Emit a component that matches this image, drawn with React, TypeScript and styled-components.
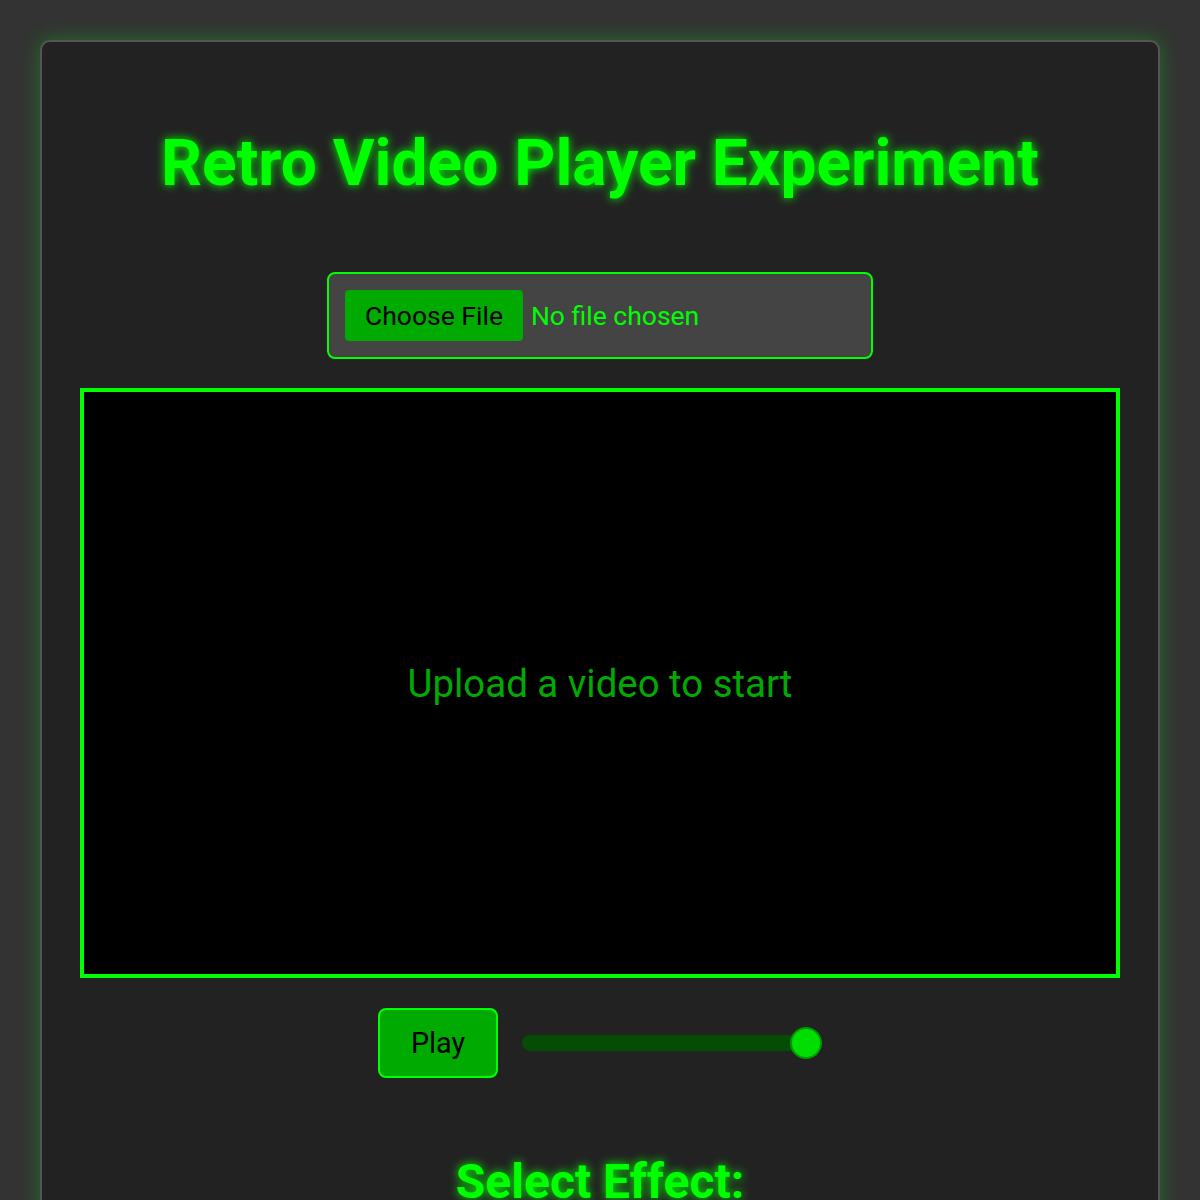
import React from 'react';
import styled, { createGlobalStyle } from 'styled-components';

const GlobalStyle = createGlobalStyle`
  * {
    box-sizing: border-box;
  }

  body {
    margin: 0;
    padding: 40px;
    background: #333333;
    font-family: Roboto, "Liberation Sans", sans-serif;
    color: #00ff00;
  }
`;

const Shell = styled.main`
  background: #222222;
  border: 2px solid #555555;
  border-radius: 10px;
  padding: 40px 38px;
  box-shadow: 0 0 20px rgba(0, 255, 0, 0.3);
  display: flex;
  flex-direction: column;
  align-items: center;
`;

const Title = styled.h1`
  margin: 44px 0 71px;
  font-size: 64px;
  font-weight: 700;
  color: #00ff00;
  text-shadow: 0 0 10px #00ff00;
  text-align: center;
`;

const FileInput = styled.input`
  width: 546px;
  padding: 16px;
  background: #444444;
  border: 2px solid #00ff00;
  border-radius: 8px;
  color: #00ff00;
  font-family: Roboto, "Liberation Sans", sans-serif;
  font-size: 26.5px;
  margin-bottom: 29px;

  &::file-selector-button {
    background: #00aa00;
    color: #000000;
    border: none;
    border-radius: 4px;
    padding: 10px 20px;
    margin-right: 8px;
    font-family: Roboto, "Liberation Sans", sans-serif;
    font-size: 26.5px;
    cursor: pointer;
  }
`;

const Screen = styled.div`
  width: 100%;
  height: 590px;
  background: #000000;
  border: 4px solid #00ff00;
  display: flex;
  align-items: center;
  justify-content: center;
  margin-bottom: 30px;
`;

const Placeholder = styled.span`
  font-size: 38.4px;
  color: #00aa00;
`;

const Controls = styled.div`
  display: flex;
  align-items: center;
  gap: 24px;
`;

const PlayButton = styled.button`
  background: #00aa00;
  color: #000000;
  border: 2px solid #00ff00;
  border-radius: 8px;
  padding: 16px 31px;
  font-family: Roboto, "Liberation Sans", sans-serif;
  font-size: 28.8px;
  cursor: pointer;
`;

const Volume = styled.input`
  -webkit-appearance: none;
  appearance: none;
  width: 300px;
  height: 16px;
  margin: 0;
  border-radius: 8px;
  background: #054d05;
  outline: none;

  &::-webkit-slider-thumb {
    -webkit-appearance: none;
    appearance: none;
    width: 32px;
    height: 32px;
    border-radius: 50%;
    background: #00dd00;
    border: 2px solid #009900;
    cursor: pointer;
  }
`;

const SectionTitle = styled.h2`
  margin: 75px 0 20px;
  font-size: 48px;
  font-weight: 700;
  color: #00ff00;
  text-shadow: 0 0 10px #00ff00;
`;

const App: React.FC = () => {
  return (
    <>
      <GlobalStyle />
      <Shell>
        <Title>Retro Video Player Experiment</Title>
        <FileInput type="file" accept="video/*" />
        <Screen>
          <Placeholder>Upload a video to start</Placeholder>
        </Screen>
        <Controls>
          <PlayButton>Play</PlayButton>
          <Volume type="range" min={0} max={1} step={0.01} defaultValue={1} />
        </Controls>
        <SectionTitle>Select Effect:</SectionTitle>
      </Shell>
    </>
  );
};

export default App;
